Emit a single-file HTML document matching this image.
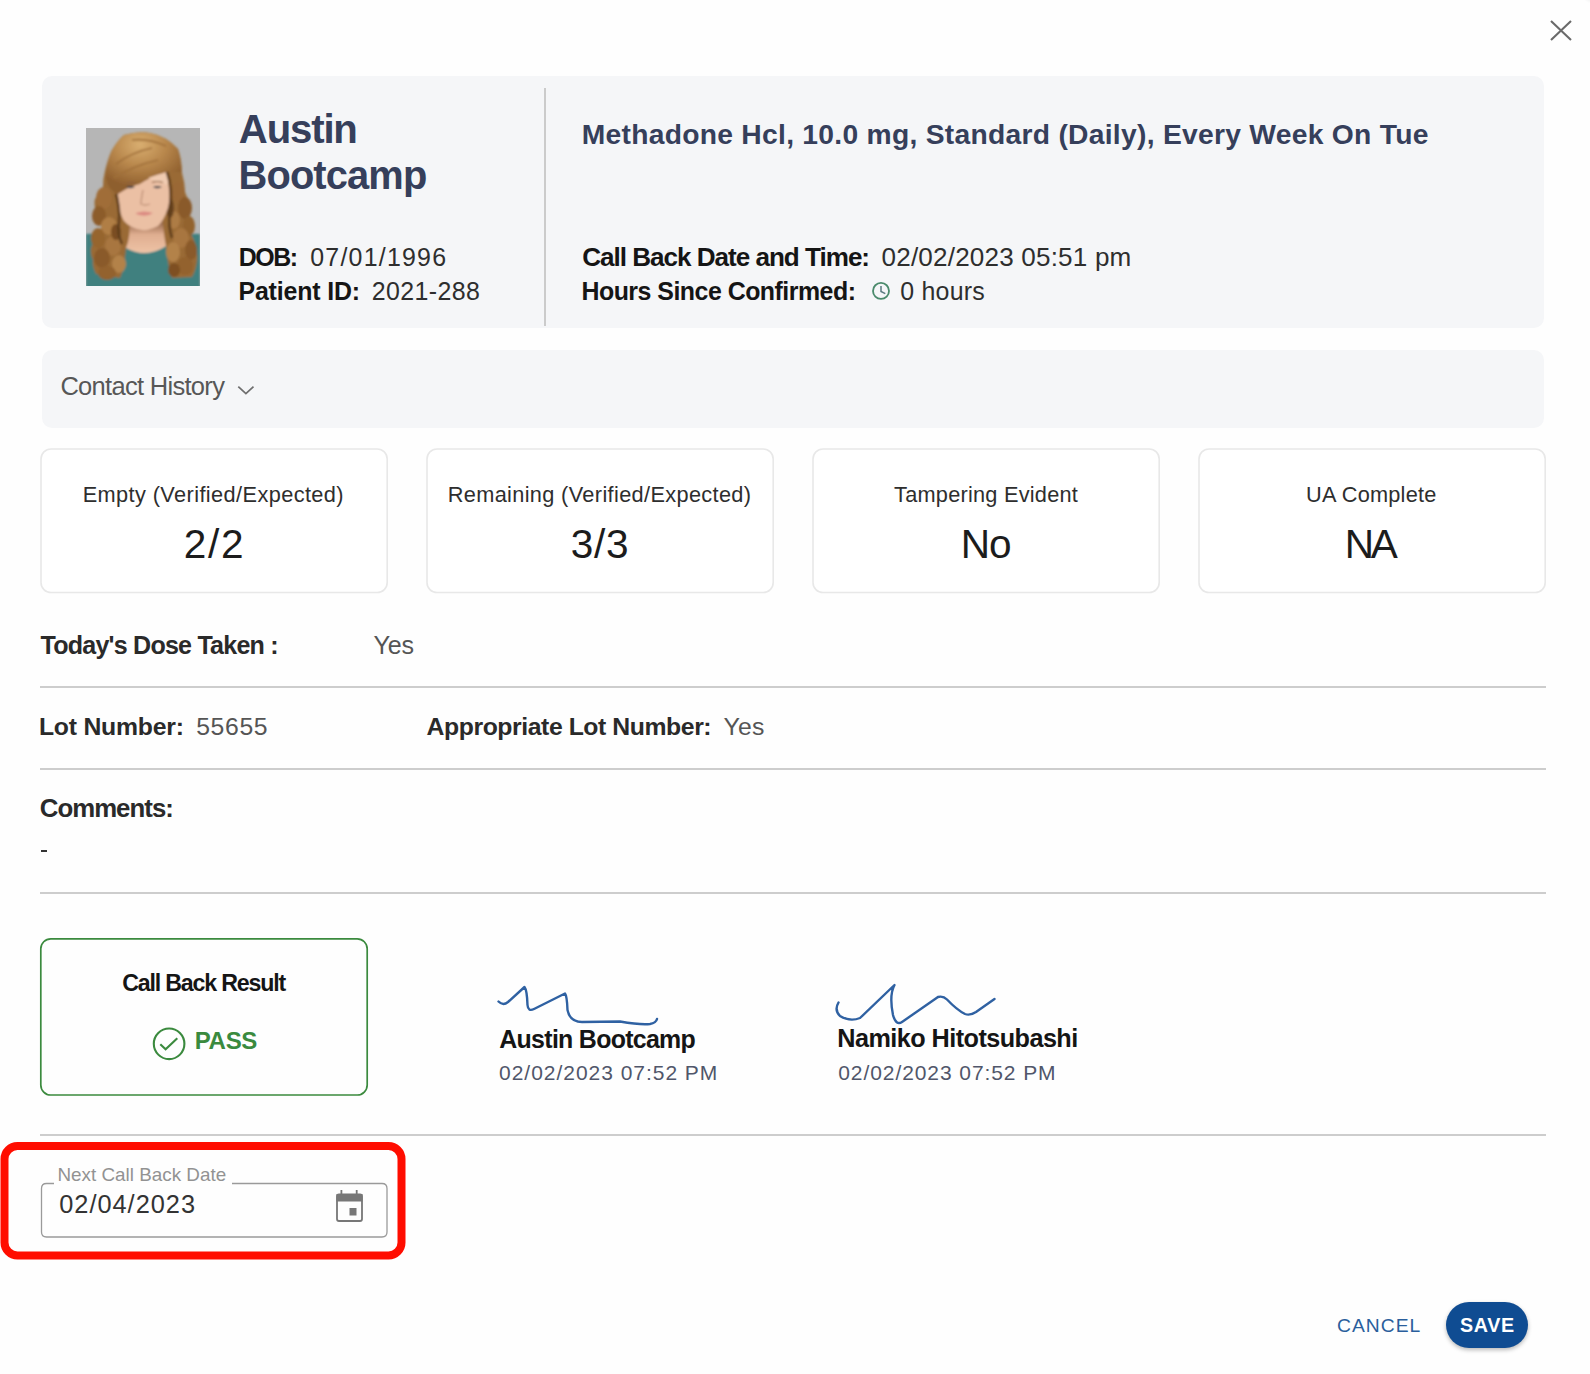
<!DOCTYPE html>
<html><head><meta charset="utf-8"><style>
html,body{margin:0;padding:0;}
body{width:1590px;height:1374px;overflow:hidden;background:#fefefe;position:relative;font-family:"Liberation Sans",sans-serif;}
.t{position:absolute;white-space:nowrap;line-height:1;}
.bg{position:absolute;background:#f5f6f8;border-radius:10px;}
.card{position:absolute;top:449px;width:345px;height:142px;border:1px solid #e0e0e0;border-radius:10px;background:#fff;}
.hr{position:absolute;left:40px;width:1506px;height:2px;background:#cdcdcd;}
</style></head><body>
<div class="bg" style="left:42px;top:76px;width:1502px;height:252px"></div>
<div style="position:absolute;left:544px;top:88px;width:2px;height:238px;background:#cbcbcb"></div>
<svg style="position:absolute;left:86px;top:128px" width="114" height="158" viewBox="0 0 114 158">
<defs><clipPath id="pc"><rect width="114" height="158"/></clipPath>
<filter id="sb" x="-10%" y="-10%" width="120%" height="120%"><feGaussianBlur stdDeviation="1.1"/></filter>
<radialGradient id="hg" cx="0.45" cy="0.2" r="0.7"><stop offset="0" stop-color="#d9ae70"/><stop offset="0.5" stop-color="#b8874c"/><stop offset="1" stop-color="#8e5e2d"/></radialGradient>
<linearGradient id="nk" x1="0" y1="0" x2="0" y2="1"><stop offset="0.2" stop-color="#9c6e52"/><stop offset="0.5" stop-color="#dfae90"/><stop offset="1" stop-color="#eec3a6"/></linearGradient>
</defs>
<rect width="114" height="158" fill="#b6b6b6"/>
<g clip-path="url(#pc)" filter="url(#sb)">
<path d="M0 106 Q18 104 38 118 Q58 132 80 118 Q98 104 114 106 V160 H0Z" fill="#41807f"/>
<path d="M38 7 Q52 3 64 5 Q80 8 92 21 Q96 33 96 45 Q99 55 99 64 Q104 75 104 86 Q101 96 103 104 Q108 110 109 116 Q112 125 111 133 Q110 142 106 149 L86 150 Q82 140 80 118 L40 120 Q38 142 34 150 L10 146 Q6 138 7 132 Q4 126 5 120 Q8 112 12 104 Q18 98 17 92 Q10 86 9 80 Q8 74 9 71 Q14 64 17 59 Q17 50 19 43 Q22 30 26 22 Q32 12 38 7 Z" fill="#9a6a35"/>
<ellipse cx="18" cy="70" rx="8" ry="11" fill="#a06d38"/>
<ellipse cx="13" cy="88" rx="7" ry="10" fill="#8c5c2b"/>
<ellipse cx="23" cy="98" rx="8" ry="9" fill="#b07e45"/>
<ellipse cx="12" cy="110" rx="7" ry="10" fill="#96652f"/>
<ellipse cx="27" cy="118" rx="8" ry="10" fill="#a87640"/>
<ellipse cx="16" cy="130" rx="8" ry="10" fill="#8a5a2a"/>
<ellipse cx="33" cy="136" rx="7" ry="9" fill="#b3824a"/>
<ellipse cx="21" cy="145" rx="9" ry="7" fill="#93622e"/>
<ellipse cx="30" cy="104" rx="5" ry="8" fill="#7a4d22"/>
<ellipse cx="92" cy="64" rx="7" ry="10" fill="#9a6834"/>
<ellipse cx="99" cy="80" rx="7" ry="11" fill="#8a5a2a"/>
<ellipse cx="88" cy="92" rx="6" ry="9" fill="#ad7b44"/>
<ellipse cx="103" cy="98" rx="6" ry="10" fill="#93632f"/>
<ellipse cx="95" cy="110" rx="8" ry="10" fill="#a87640"/>
<ellipse cx="105" cy="122" rx="6" ry="10" fill="#8a5a2a"/>
<ellipse cx="87" cy="124" rx="7" ry="10" fill="#b3824a"/>
<ellipse cx="99" cy="138" rx="8" ry="9" fill="#93622e"/>
<ellipse cx="88" cy="142" rx="6" ry="7" fill="#7e5024"/>
<ellipse cx="84" cy="80" rx="4" ry="10" fill="#6a4420"/>
<path d="M43 90 L76 88 Q78 108 80 118 Q60 131 40 120 Q45 108 43 90Z" fill="url(#nk)"/>
<path d="M26 22 Q32 12 38 7 Q52 3 64 5 Q80 8 92 21 Q96 33 95 44 Q88 44 80 43 Q64 47 53 55 Q42 60 32 66 Q22 62 20 50 Q20 34 26 22Z" fill="url(#hg)"/>
<path d="M30 36 Q46 24 66 20 M28 50 Q46 38 72 32 M46 12 Q62 10 80 18" stroke="#a0703a" stroke-width="1.6" fill="none"/>
<path d="M32 66 Q44 58 54 56 Q64 49 80 44 Q83 53 83 62 Q84 72 82 80 Q78 92 72 98 Q62 103 56 102 Q44 100 38 93 Q33 84 33 76 Z" fill="#ebc0a4"/>
<path d="M62 50 Q72 46 80 45 Q82 51 82 57 Q72 55 62 50Z" fill="#f0cbb1"/>
<path d="M50 85 Q58 82 67 85 Q60 90 50 86Z" fill="#dc8a82"/>
<path d="M40 59 Q44 57 49 59 Q44 61.5 40 59Z M67 59 Q71 57 76 59 Q71 61.5 67 59Z" fill="#3a3f48"/>
<path d="M41 55.5 Q45 53.5 50 55.5 M66 54.5 Q71 52.5 77 54.5" stroke="#8a5e3e" stroke-width="1.2" fill="none"/>
<path d="M57 62 Q55 72 55 76 Q59 78 64 76" stroke="#c09278" stroke-width="1.3" fill="none"/>
<path d="M81 44 Q87 60 84 84 Q82 98 86 110 M30 66 Q34 80 33 94 Q31 106 36 116" stroke="#5e3c1c" stroke-width="2.6" fill="none"/>
</g>
</svg>
<div class="bg" style="left:42px;top:350px;width:1502px;height:78px"></div>
<svg style="position:absolute;left:0;top:0" width="1590" height="700" viewBox="0 0 1590 700">
<g stroke="#e8e8e8" stroke-width="1.6" fill="#fff">
<rect x="41" y="449" width="346.2" height="143.5" rx="10"/>
<rect x="427" y="449" width="346.2" height="143.5" rx="10"/>
<rect x="813" y="449" width="346.2" height="143.5" rx="10"/>
<rect x="1199" y="449" width="346.2" height="143.5" rx="10"/>
</g></svg>
<div class="hr" style="top:686px"></div>
<div class="hr" style="top:768px"></div>
<div class="hr" style="top:892px"></div>
<div class="hr" style="top:1134px"></div>
<div style="position:absolute;left:41px;top:849.5px;width:6px;height:2.5px;background:#333"></div>
<svg style="position:absolute;left:0;top:0" width="1590" height="1374" viewBox="0 0 1590 1374">
 <!-- close X -->
 <path d="M1551 21 L1571 40 M1571 21 L1551 40" stroke="#6a6a6a" stroke-width="2.1" fill="none"/>
 <!-- clock -->
 <circle cx="881" cy="290.9" r="8.0" stroke="#4a8a6c" stroke-width="1.8" fill="none"/>
 <path d="M881 286 L881 291.5 L885.3 293.6" stroke="#5a7a80" stroke-width="1.5" fill="none"/>
 <!-- chevron -->
 <path d="M238.3 386.6 L245.9 393.6 L253.5 386.6" stroke="#6e6e6e" stroke-width="1.7" fill="none"/>
 <!-- green box -->
 <rect x="40.8" y="938.8" width="326.4" height="156.2" rx="10" stroke="#3b8a3e" stroke-width="1.7" fill="none"/>
 <circle cx="169.1" cy="1043.8" r="15.3" stroke="#3b8a3e" stroke-width="2.1" fill="none"/>
 <path d="M160.3 1044.2 L165.6 1049.2 L177.3 1038.2" stroke="#3b8a3e" stroke-width="2.1" fill="none"/>
 <!-- signatures -->
 <path d="M498.5 1001.5 Q503 1006 508 1002 L524.5 987 Q527 990 527.5 1005 Q528 1012 534 1009 L565 993.5 Q567 996 567.5 1010 Q570 1022 582 1022 L620 1021.5 Q640 1025 650 1024 Q656 1023 657 1019" stroke="#2f61a2" stroke-width="2.4" fill="none" stroke-linecap="round" stroke-linejoin="round"/>
 <path d="M838.5 1002.5 Q834 1010 840 1016 Q850 1022 860 1018 L894.5 985 Q889 995 893 1015 Q896 1026 902 1022 L938 997 Q943 995.5 947 999.5 Q957 1010 965 1014 Q970 1016 976 1012 L994.5 999" stroke="#2f61a2" stroke-width="2.4" fill="none" stroke-linecap="round" stroke-linejoin="round"/>
 <!-- red highlight -->
 <rect x="4.5" y="1146" width="397" height="109.5" rx="13" stroke="#ff0d00" stroke-width="8" fill="none"/>
 <!-- date field outline with legend gap -->
 <path d="M54 1183.5 L46.5 1183.5 Q41.5 1183.5 41.5 1188.5 L41.5 1232 Q41.5 1237 46.5 1237 L382 1237 Q387 1237 387 1232 L387 1188.5 Q387 1183.5 382 1183.5 L232 1183.5" stroke="#9a9a9a" stroke-width="1.3" fill="none"/>
 <!-- calendar -->
 <rect x="337" y="1194.5" width="25" height="26.5" rx="2" stroke="#777" stroke-width="1.8" fill="none"/>
 <rect x="336.5" y="1194" width="26" height="7.5" fill="#777"/>
 <rect x="340.5" y="1190" width="1.8" height="5" fill="#777"/>
 <rect x="355.8" y="1190" width="1.8" height="5" fill="#777"/>
 <rect x="349.5" y="1208" width="7" height="7.5" fill="#777"/>
</svg>
<div style="position:absolute;left:1446px;top:1302px;width:82px;height:46px;border-radius:23px;background:#0f4c92;box-shadow:0 2px 4px rgba(0,0,0,.28)"></div>
<div class="t" style="left:238.87px;top:110.08px;font-size:40.14px;font-weight:700;color:#363f5b;letter-spacing:-1.16px">Austin</div>
<div class="t" style="left:238.51px;top:156.12px;font-size:39.86px;font-weight:700;color:#363f5b;letter-spacing:-0.87px">Bootcamp</div>
<div class="t" style="left:238.84px;top:244.91px;font-size:24.93px;font-weight:700;color:#151515;letter-spacing:-1.49px">DOB:</div>
<div class="t" style="left:310.22px;top:244.91px;font-size:24.93px;font-weight:400;color:#2e2e2e;letter-spacing:1.23px">07/01/1996</div>
<div class="t" style="left:238.44px;top:278.91px;font-size:24.93px;font-weight:700;color:#151515;letter-spacing:-0.16px">Patient ID:</div>
<div class="t" style="left:371.83px;top:278.91px;font-size:24.93px;font-weight:400;color:#2e2e2e;letter-spacing:0.40px">2021-288</div>
<div class="t" style="left:581.73px;top:120.48px;font-size:28.26px;font-weight:700;color:#363f5b;letter-spacing:0.27px">Methadone Hcl, 10.0 mg, Standard (Daily), Every Week On Tue</div>
<div class="t" style="left:582.18px;top:244.33px;font-size:26.09px;font-weight:700;color:#151515;letter-spacing:-1.01px">Call Back Date and Time:</div>
<div class="t" style="left:881.58px;top:244.33px;font-size:26.09px;font-weight:400;color:#2e2e2e;letter-spacing:0.18px">02/02/2023 05:51 pm</div>
<div class="t" style="left:581.44px;top:278.91px;font-size:24.93px;font-weight:700;color:#151515;letter-spacing:-0.51px">Hours Since Confirmed:</div>
<div class="t" style="left:900.22px;top:278.91px;font-size:24.93px;font-weight:400;color:#2e2e2e;letter-spacing:0.24px">0 hours</div>
<div class="t" style="left:60.40px;top:374.42px;font-size:25.51px;font-weight:400;color:#575757;letter-spacing:-0.70px">Contact History</div>
<div class="t" style="left:82.70px;top:484.02px;font-size:21.74px;font-weight:400;color:#2e2e2e;letter-spacing:0.40px">Empty (Verified/Expected)</div>
<div class="t" style="left:447.70px;top:484.02px;font-size:21.74px;font-weight:400;color:#2e2e2e;letter-spacing:0.35px">Remaining (Verified/Expected)</div>
<div class="t" style="left:894.06px;top:484.02px;font-size:21.74px;font-weight:400;color:#2e2e2e;letter-spacing:0.24px">Tampering Evident</div>
<div class="t" style="left:1306.04px;top:484.02px;font-size:21.74px;font-weight:400;color:#2e2e2e;letter-spacing:0.22px">UA Complete</div>
<div class="t" style="left:183.70px;top:524.01px;font-size:40.58px;font-weight:400;color:#1c1c1c;letter-spacing:1.77px">2/2</div>
<div class="t" style="left:570.73px;top:524.01px;font-size:40.58px;font-weight:400;color:#1c1c1c;letter-spacing:0.75px">3/3</div>
<div class="t" style="left:960.83px;top:524.01px;font-size:40.58px;font-weight:400;color:#1c1c1c;letter-spacing:-1.06px">No</div>
<div class="t" style="left:1344.83px;top:524.01px;font-size:40.58px;font-weight:400;color:#1c1c1c;letter-spacing:-3.40px">NA</div>
<div class="t" style="left:40.50px;top:632.79px;font-size:25.07px;font-weight:700;color:#2a2a2a;letter-spacing:-0.78px">Today&#39;s Dose Taken :</div>
<div class="t" style="left:373.41px;top:632.79px;font-size:25.07px;font-weight:400;color:#555;letter-spacing:-0.11px">Yes</div>
<div class="t" style="left:38.95px;top:714.93px;font-size:24.78px;font-weight:700;color:#2a2a2a;letter-spacing:-0.22px">Lot Number:</div>
<div class="t" style="left:196.23px;top:714.93px;font-size:24.78px;font-weight:400;color:#555;letter-spacing:0.62px">55655</div>
<div class="t" style="left:426.61px;top:714.93px;font-size:24.78px;font-weight:700;color:#2a2a2a;letter-spacing:-0.43px">Appropriate Lot Number:</div>
<div class="t" style="left:723.61px;top:714.93px;font-size:24.78px;font-weight:400;color:#555;letter-spacing:0.17px">Yes</div>
<div class="t" style="left:39.79px;top:796.37px;font-size:25.80px;font-weight:700;color:#2a2a2a;letter-spacing:-0.98px">Comments:</div>
<div class="t" style="left:122.28px;top:972.29px;font-size:23.19px;font-weight:700;color:#151515;letter-spacing:-1.19px">Call Back Result</div>
<div class="t" style="left:194.70px;top:1029.15px;font-size:24.06px;font-weight:700;color:#3a8a3e;letter-spacing:-0.33px">PASS</div>
<div class="t" style="left:499.31px;top:1026.91px;font-size:24.93px;font-weight:700;color:#151515;letter-spacing:-0.70px">Austin Bootcamp</div>
<div class="t" style="left:499.04px;top:1061.64px;font-size:21.01px;font-weight:400;color:#50566a;letter-spacing:0.97px">02/02/2023 07:52 PM</div>
<div class="t" style="left:837.32px;top:1026.47px;font-size:25.22px;font-weight:700;color:#151515;letter-spacing:-0.55px">Namiko Hitotsubashi</div>
<div class="t" style="left:838.24px;top:1061.64px;font-size:21.01px;font-weight:400;color:#50566a;letter-spacing:0.92px">02/02/2023 07:52 PM</div>
<div class="t" style="left:57.53px;top:1165.99px;font-size:18.84px;font-weight:400;color:#929292;letter-spacing:0.01px">Next Call Back Date</div>
<div class="t" style="left:59.21px;top:1192.44px;font-size:25.36px;font-weight:400;color:#333;letter-spacing:0.99px">02/04/2023</div>
<div class="t" style="left:1337.00px;top:1316.02px;font-size:19.28px;font-weight:400;color:#2a5e9c;letter-spacing:1.02px">CANCEL</div>
<div class="t" style="left:1459.89px;top:1315.65px;font-size:19.71px;font-weight:700;color:#ffffff;letter-spacing:0.74px">SAVE</div>
<div style="position:absolute;right:-14px;top:-14px;width:22px;height:18px;border-radius:50%;background:radial-gradient(closest-side,rgba(0,0,0,.10),rgba(0,0,0,0))"></div>
</body></html>
